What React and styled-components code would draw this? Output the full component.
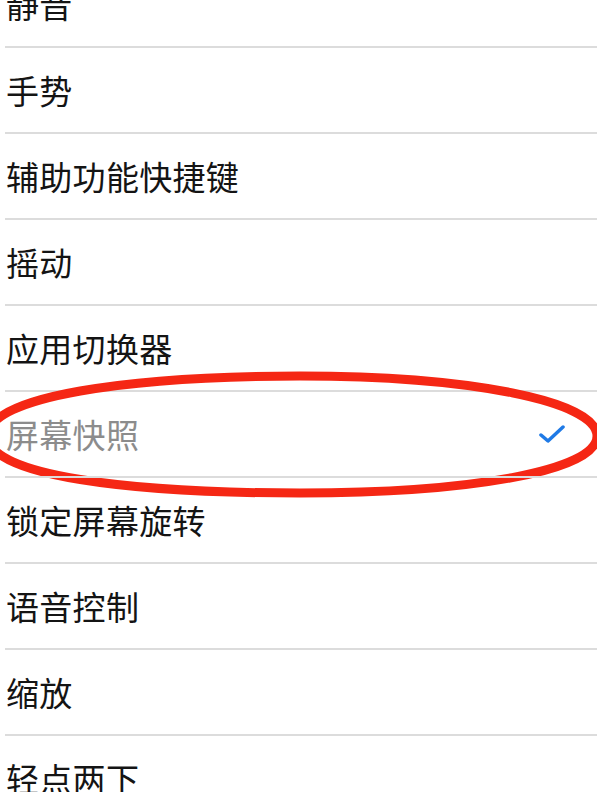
import styled, { createGlobalStyle } from "styled-components";

const GlobalStyle = createGlobalStyle`
  html, body {
    margin: 0;
    padding: 0;
    background: #ffffff;
    overflow: hidden;
  }
  body {
    font-family: "Noto Sans CJK SC", "Noto Sans", sans-serif;
  }
`;

const items = [
  { label: "静音" },
  { label: "手势" },
  { label: "辅助功能快捷键" },
  { label: "摇动" },
  { label: "应用切换器" },
  { label: "屏幕快照", muted: true, checked: true, circled: true },
  { label: "锁定屏幕旋转" },
  { label: "语音控制" },
  { label: "缩放" },
  { label: "轻点两下" },
];

function App() {
  return (
    <>
      <GlobalStyle />
      <Screen>
        <List>
          {items.map(item => (
            <Row key={item.label}>
              <Label $muted={item.muted}>{item.label}</Label>
              {item.checked && (
                <Check viewBox="0 0 26 20">
                  <path d="M2 11 L9 17 L24 3" />
                </Check>
              )}
              {item.circled && (
                <Circle viewBox="0 0 597 130" preserveAspectRatio="none">
                  <path d="M300 5 C470 5 597 30 597 65 C597 100 470 122 300 122 C130 122 -12 105 -12 65 C-12 25 130 5 300 5 Z" />
                </Circle>
              )}
            </Row>
          ))}
        </List>
      </Screen>
    </>
  );
}
export default App;

const Screen = styled.div`
  width: 597px;
  height: 792px;
  overflow: hidden;
  background: #ffffff;
`;

const List = styled.div`
  display: flex;
  flex-direction: column;
  margin-top: -38px;
`;

const Row = styled.div`
  position: relative;
  height: 86px;
  flex-shrink: 0;
  display: flex;
  align-items: center;
  justify-content: space-between;
  padding: 0 32px 2px 6px;
  box-sizing: border-box;

  &::after {
    content: "";
    position: absolute;
    left: 5px;
    right: 0;
    bottom: 0;
    height: 2px;
    background: #dcdcdc;
  }
`;

const Label = styled.span`
  font-size: 33px;
  line-height: 1;
  color: ${p => (p.$muted ? "#8c8c8c" : "#141414")};
  letter-spacing: 0.3px;
`;

const Check = styled.svg`
  width: 26px;
  height: 20px;
  fill: none;
  stroke: #1f7ae6;
  stroke-width: 3.5;
  stroke-linecap: round;
  stroke-linejoin: round;
`;

const Circle = styled.svg`
  position: absolute;
  left: 0;
  top: -21px;
  width: 597px;
  height: 130px;
  overflow: visible;
  pointer-events: none;
  fill: none;
  stroke: #f52714;
  stroke-width: 9;
`;
